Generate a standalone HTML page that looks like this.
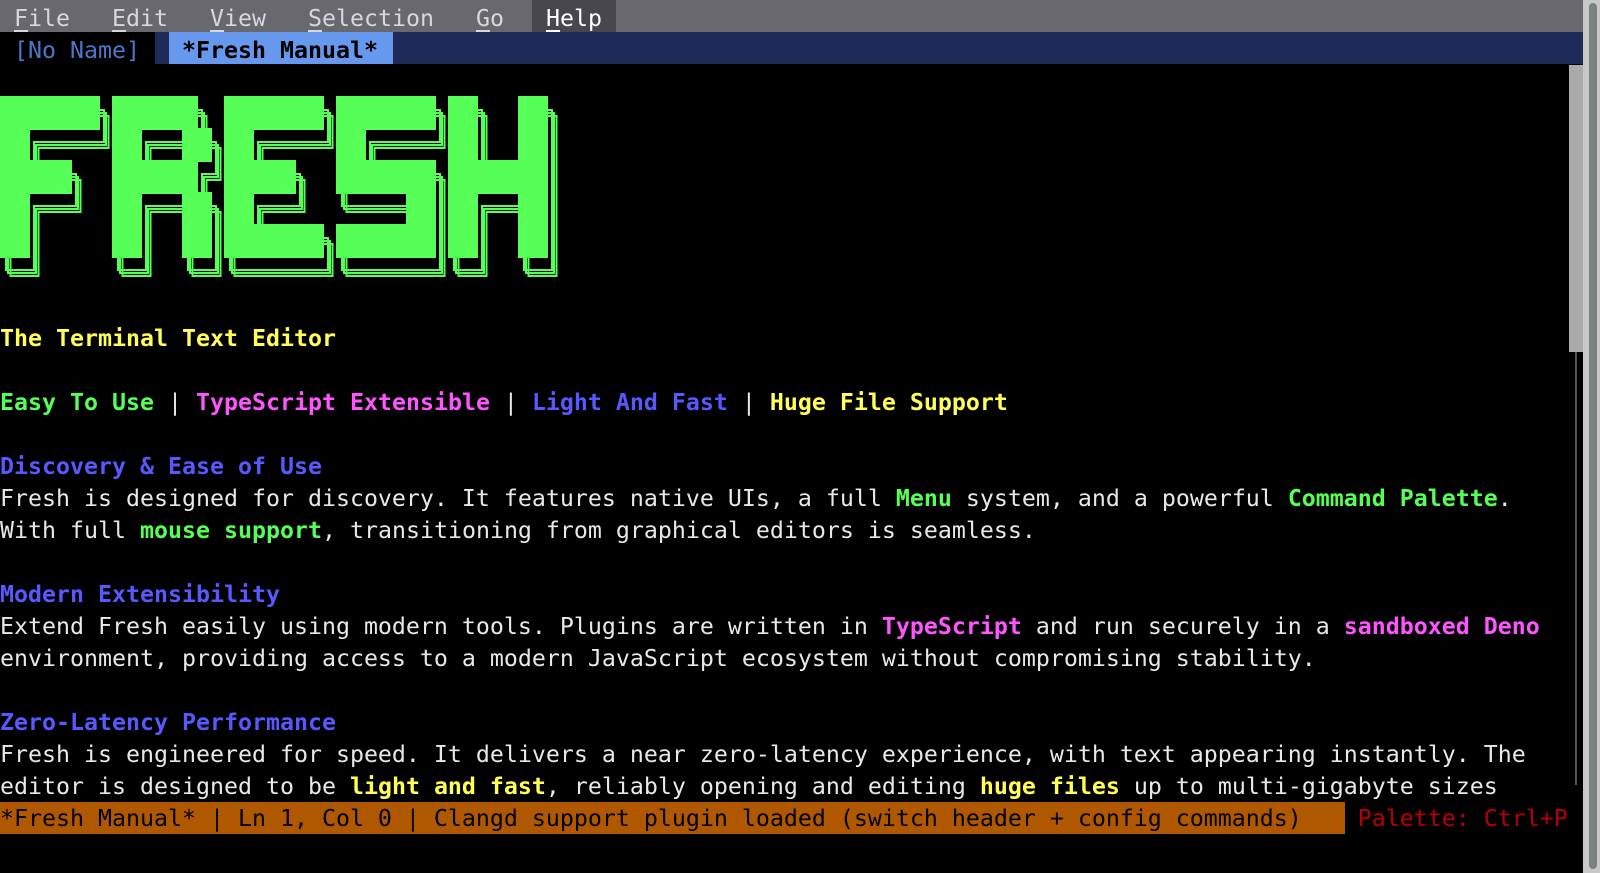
<!DOCTYPE html>
<html><head><meta charset="utf-8"><style>
html,body{margin:0;padding:0;background:#000;width:1600px;height:873px;overflow:hidden}
body{position:relative;font-family:"DejaVu Sans Mono","Liberation Mono",monospace;font-size:23.25px}
.r{position:absolute;left:0;height:32px;line-height:32px;white-space:pre;color:#e8e8e8;transform:translateY(3px)}
.g{color:#55ff55;font-weight:bold}.y{color:#ffff55;font-weight:bold}.m{color:#ff55ff;font-weight:bold}.b{color:#5858ff;font-weight:bold}
.u{text-decoration:underline;text-underline-offset:4px}
</style></head><body>
<div style="position:absolute;left:0;top:0;width:1583px;height:32px;background:#68686e"></div>
<div style="position:absolute;left:532px;top:0;width:84px;height:32px;background:#47474d"></div>
<div class="r" style="top:0;color:#d8d8d8"> <span class="u">F</span>ile   <span class="u">E</span>dit   <span class="u">V</span>iew   <span class="u">S</span>election   <span class="u">G</span>o   <span class="u" style="color:#fff">H</span><span style="color:#fff">elp</span></div>
<div style="position:absolute;left:0;top:32px;width:1583px;height:32px;background:#1e2a58"></div>
<div style="position:absolute;left:0;top:32px;width:155px;height:32px;background:#000"></div>
<div style="position:absolute;left:169px;top:32px;width:224px;height:32px;background:#6699ee"></div>
<div class="r" style="top:32px;color:#4a78c8"> [No Name]  <span style="color:#000;font-weight:bold"> *Fresh Manual* </span></div>
<svg style="position:absolute;left:0;top:0" width="600" height="300">
<g fill="none" stroke="#55ff55" stroke-width="2">
<g id="o">
<path d="M1 97H99V129H29V161H71V193H29V257H1Z"/>
<path d="M113 97H197V129H211V161H197V193H211V257H183V193H141V257H113Z M141 129H183V161H141Z"/>
<path d="M225 97H323V129H253V161H295V193H253V225H323V257H225Z"/>
<path d="M337 97H435V129H365V161H435V257H337V225H407V193H337Z"/>
<path d="M449 97H477V161H519V97H547V257H519V193H477V257H449Z"/>
</g>
</g>
<g fill="none" stroke="#55ff55" stroke-width="2">
<use href="#o" transform="translate(5,13)"/>
<use href="#o" transform="translate(7,16)"/>
<use href="#o" transform="translate(9.5,19)"/>
</g>
<g fill="#55ff55" fill-rule="evenodd">
<path d="M1 97H99V129H29V161H71V193H29V257H1Z"/>
<path d="M113 97H197V129H211V161H197V193H211V257H183V193H141V257H113Z M141 129H183V161H141Z"/>
<path d="M225 97H323V129H253V161H295V193H253V225H323V257H225Z"/>
<path d="M337 97H435V129H365V161H435V257H337V225H407V193H337Z"/>
<path d="M449 97H477V161H519V97H547V257H519V193H477V257H449Z"/>
</g>
</svg>
<div class="r y" style="top:320px">The Terminal Text Editor</div>
<div class="r" style="top:384px"><span class="g">Easy To Use</span> | <span class="m">TypeScript Extensible</span> | <span class="b">Light And Fast</span> | <span class="y">Huge File Support</span></div>
<div class="r b" style="top:448px">Discovery &amp; Ease of Use</div>
<div class="r" style="top:480px">Fresh is designed for discovery. It features native UIs, a full <span class="g">Menu</span> system, and a powerful <span class="g">Command Palette</span>.</div>
<div class="r" style="top:512px">With full <span class="g">mouse support</span>, transitioning from graphical editors is seamless.</div>
<div class="r b" style="top:576px">Modern Extensibility</div>
<div class="r" style="top:608px">Extend Fresh easily using modern tools. Plugins are written in <span class="m">TypeScript</span> and run securely in a <span class="m">sandboxed Deno</span></div>
<div class="r" style="top:640px">environment, providing access to a modern JavaScript ecosystem without compromising stability.</div>
<div class="r b" style="top:704px">Zero-Latency Performance</div>
<div class="r" style="top:736px">Fresh is engineered for speed. It delivers a near zero-latency experience, with text appearing instantly. The</div>
<div class="r" style="top:768px">editor is designed to be <span class="y">light and fast</span>, reliably opening and editing <span class="y">huge files</span> up to multi-gigabyte sizes</div>
<div style="position:absolute;left:0;top:802px;width:1345px;height:32px;background:#b05800"></div>
<div class="r" style="top:800px;color:#000">*Fresh Manual* | Ln 1, Col 0 | Clangd support plugin loaded (switch header + config commands)    <span style="color:#b80000">Palette: Ctrl+P</span></div>
<div style="position:absolute;left:1569px;top:65px;width:14px;height:287px;background:#aaa"></div>
<div style="position:absolute;left:1575px;top:352px;width:2px;height:433px;background:#555"></div>
<div style="position:absolute;left:1583px;top:0;width:17px;height:873px;background:#c8c8c8"></div>
<div style="position:absolute;left:1589px;top:3px;width:8px;height:866px;background:#7b8080;border-radius:4px"></div>
</body></html>
